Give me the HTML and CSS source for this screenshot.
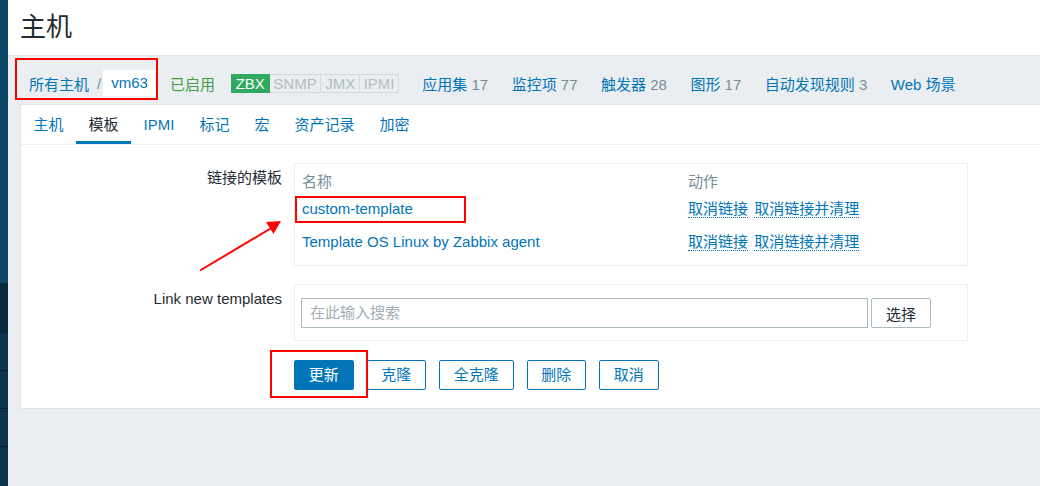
FILE: index.html
```html
<!DOCTYPE html>
<html lang="zh-CN">
<head>
<meta charset="utf-8">
<title>主机</title>
<link rel="stylesheet" href="styles.css">
</head>
<body>
<div class="app">
  <aside class="sidebar">
    <div class="seg seg-main"></div>
    <div class="seg seg-dark"></div>
    <div class="seg seg-mid"></div>
    <div class="seg seg-mid"></div>
    <div class="seg seg-mid"></div>
    <div class="seg seg-last"></div>
  </aside>
  <main class="main">
    <header class="page-header"><h1 class="page-title">主机</h1></header>
    <nav class="host-nav">
      <div class="crumbs">
        <a class="link">所有主机</a><span class="sep">/</span><span class="crumb-current">vm63</span>
      </div>
      <span class="status-on">已启用</span>
      <div class="badges">
        <span class="badge badge-green">ZBX</span><span class="badge badge-grey">SNMP</span><span class="badge badge-grey">JMX</span><span class="badge badge-grey">IPMI</span>
      </div>
      <a class="nav-item first"><span class="link">应用集</span> <span class="count">17</span></a>
      <a class="nav-item"><span class="link">监控项</span> <span class="count">77</span></a>
      <a class="nav-item"><span class="link">触发器</span> <span class="count">28</span></a>
      <a class="nav-item"><span class="link">图形</span> <span class="count">17</span></a>
      <a class="nav-item"><span class="link">自动发现规则</span> <span class="count">3</span></a>
      <a class="nav-item"><span class="link">Web 场景</span></a>
    </nav>
    <section class="panel">
      <ul class="tabs">
        <li class="tab">主机</li>
        <li class="tab active">模板</li>
        <li class="tab">IPMI</li>
        <li class="tab">标记</li>
        <li class="tab">宏</li>
        <li class="tab">资产记录</li>
        <li class="tab">加密</li>
      </ul>
      <form class="form">
        <div class="form-row">
          <div class="form-label">链接的模板</div>
          <div class="form-field box box-linked">
            <table class="linked">
              <thead>
                <tr><th class="col-name">名称</th><th>动作</th></tr>
              </thead>
              <tbody>
                <tr>
                  <td class="col-name"><a class="link">custom-template</a></td>
                  <td><a class="link dotted">取消链接</a> <a class="link dotted second">取消链接并清理</a></td>
                </tr>
                <tr>
                  <td class="col-name"><a class="link">Template OS Linux by Zabbix agent</a></td>
                  <td><a class="link dotted">取消链接</a> <a class="link dotted second">取消链接并清理</a></td>
                </tr>
              </tbody>
            </table>
          </div>
        </div>
        <div class="form-row">
          <div class="form-label">Link new templates</div>
          <div class="form-field box box-new">
            <div class="search">在此输入搜索</div>
            <button type="button" class="btn-grey">选择</button>
          </div>
        </div>
        <div class="form-actions">
          <button type="button" class="btn btn-primary">更新</button>
          <button type="button" class="btn btn-alt">克隆</button>
          <button type="button" class="btn btn-alt">全克隆</button>
          <button type="button" class="btn btn-alt">删除</button>
          <button type="button" class="btn btn-alt">取消</button>
        </div>
      </form>
    </section>
  </main>
</div>
<div class="annotations">
  <div class="mark mark-crumbs"></div>
  <div class="mark mark-template"></div>
  <div class="mark mark-update"></div>
  <svg class="arrow" width="1040" height="486" viewBox="0 0 1040 486">
    <line x1="200" y1="270.5" x2="273" y2="227" stroke="#f00" stroke-width="2"/>
    <polygon points="281,221 266,222 273.5,234" fill="#f00"/>
  </svg>
</div>
</body>
</html>
```
FILE: styles.css
```css
* { box-sizing: border-box; }
html, body {
  margin: 0;
  padding: 0;
  width: 1040px;
  height: 486px;
  overflow: hidden;
}
body {
  font-family: "Liberation Sans", "Noto Sans CJK SC", sans-serif;
  font-size: 15px;
  color: #1f2c33;
  background: #ebeef0;
  position: relative;
}
.app {
  display: flex;
  height: 486px;
}
.sidebar {
  width: 8px;
  flex: none;
  display: flex;
  flex-direction: column;
  background: #0b3350;
}
.seg-main { height: 283px; background: #0b4667; }
.seg-dark { height: 50px; background: #072a3d; }
.seg-mid { height: 38px; border-bottom: 1px solid #051d2c; background: #0b3350; }
.seg-last { flex: 1; background: #0b3350; }

.main {
  flex: 1;
  min-width: 0;
  background: #ebeef0;
}
.page-header {
  height: 56px;
  background: #fff;
  border-bottom: 1px solid #dfe4e7;
  padding-left: 12px;
}
.page-title {
  margin: 0;
  font-size: 26px;
  font-weight: normal;
  line-height: 55px;
  color: #1f2c33;
}
.host-nav {
  height: 48px;
  display: flex;
  align-items: center;
  padding: 6px 0 0 21px;
  white-space: nowrap;
}
.link { color: #0275b8; text-decoration: none; }
.crumbs { display: flex; align-items: center; height: 26px; }
.sep { color: #768d99; margin: 0 2px 0 8px; }
.crumb-current {
  background: #fff;
  height: 26px;
  line-height: 26px;
  padding: 0 8px;
  color: #0275b8;
}
.status-on { color: #429e47; margin-left: 14px; }
.badges { display: flex; margin-left: 16px; }
.badge {
  height: 19px;
  line-height: 17px;
  padding: 0 3.75px;
  font-size: 15px;
  border: 1px solid #d3dadf;
}
.badge + .badge { border-left: none; }
.badge-green { background: #30a960; border-color: #30a960; color: #fff; }
.badge-grey { color: #b0bcc4; background: #ebeef0; }
.nav-item { margin-left: 23.5px; }
.nav-item.first { margin-left: 23px; }
.count { color: #768d99; }

.panel {
  margin: 0 -10px 0 12px;
  background: #fff;
  border: 1px solid #dfe4e7;
  height: 305px;
}
.tabs {
  list-style: none;
  margin: 0;
  padding: 0;
  display: flex;
  height: 40px;
  border-bottom: 1px solid #ebeef0;
}
.tab {
  padding: 0 12.5px;
  line-height: 39px;
  height: 39px;
  color: #0275b8;
}
.tab.active {
  color: #1f2c33;
  box-shadow: inset 0 -3px 0 #0275b8;
}
.form { padding-top: 18px; }
.form-row {
  display: grid;
  grid-template-columns: 261px 674px;
  column-gap: 12px;
  margin-bottom: 18px;
}
.form-label {
  text-align: right;
  padding-top: 6px;
  line-height: 18px;
}
.box { border: 1px solid #ebeef0; }
.box-linked { padding: 6px 7px 7px; }
.linked { border-collapse: collapse; width: 100%; }
.linked th {
  text-align: left;
  font-weight: normal;
  color: #768d99;
  height: 23px;
  padding: 0;
  line-height: 18px;
}
.linked td {
  height: 33px;
  padding: 0;
  line-height: 18px;
  white-space: nowrap;
}
.linked tbody tr:first-child td { height: 32px; }
.col-name { width: 386px; }
.dotted { border-bottom: 1px dotted #0275b8; }
.second { margin-left: 2px; }

.box-new {
  display: flex;
  padding: 13px 6px 12px;
}
.search {
  width: 567px;
  height: 30px;
  border: 1px solid #acbbc2;
  line-height: 28px;
  padding-left: 8px;
  color: #a3aeb4;
}
.btn-grey {
  margin-left: 3px;
  width: 60px;
  height: 30px;
  border: 1px solid #acbbc2;
  border-radius: 2px;
  background: #fff;
  font: inherit;
  color: #1f2c33;
  padding: 0;
}
.form-actions {
  display: flex;
  gap: 13px;
  padding-left: 273px;
  margin-top: 19px;
}
.btn {
  height: 30px;
  padding: 0 13.75px;
  border: 1px solid #0275b8;
  border-radius: 2px;
  font: inherit;
  line-height: 28px;
}
.btn-primary { background: #0275b8; color: #fff; }
.btn-alt { background: #fff; color: #0275b8; }

.annotations {
  position: absolute;
  left: 0;
  top: 0;
  width: 1040px;
  height: 486px;
  pointer-events: none;
}
.mark {
  position: absolute;
  border: 2px solid #f00;
}
.mark-crumbs { left: 15px; top: 58px; width: 143px; height: 42px; }
.mark-template { left: 295px; top: 196px; width: 171px; height: 27px; }
.mark-update { left: 270px; top: 350px; width: 98px; height: 48px; }
.arrow { position: absolute; left: 0; top: 0; }
```
